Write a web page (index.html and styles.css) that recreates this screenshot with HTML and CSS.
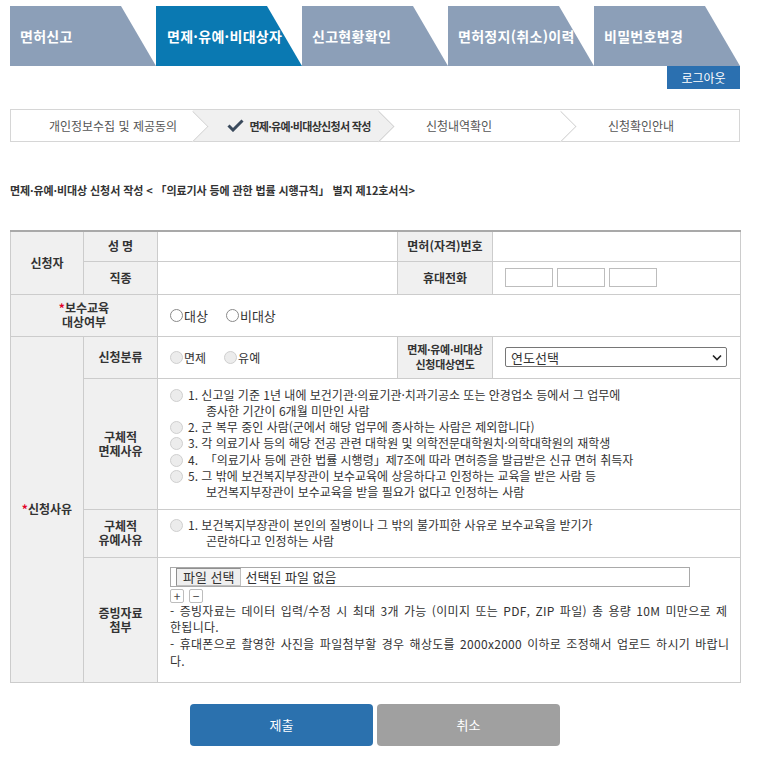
FILE: index.html
```html
<!DOCTYPE html>
<html lang="ko">
<head>
<meta charset="utf-8">
<title>면제·유예·비대상자</title>
<link rel="stylesheet" href="styles.css">
</head>
<body>
<div class="page">
  <nav class="tabs">
    <div class="tab">면허신고</div>
    <div class="tab active">면제·유예·비대상자</div>
    <div class="tab">신고현황확인</div>
    <div class="tab">면허정지(취소)이력</div>
    <div class="tab">비밀번호변경</div>
  </nav>
  <div class="logout-row"><div class="logout">로그아웃</div></div>

  <div class="steps">
    <div class="step s1">개인정보수집 및 제공동의</div>
    <div class="step s2 on">
      <svg class="check" width="17" height="13" viewBox="0 0 17 13"><path d="M1.5 6.5 L6 11 L15.5 1.5" fill="none" stroke="#3a4a5c" stroke-width="3"/></svg>
      면제·유예·비대상신청서 작성
    </div>
    <div class="step s3">신청내역확인</div>
    <div class="step s4">신청확인안내</div>
  </div>

  <h2 class="doc-title">면제·유예·비대상 신청서 작성 &lt; 「의료기사 등에 관한 법률 시행규칙」 별지 제12호서식&gt;</h2>

  <table class="form">
    <colgroup>
      <col class="c1"><col class="c2"><col class="c3"><col class="c4"><col class="c5">
    </colgroup>
    <tr class="r1">
      <th rowspan="2">신청자</th>
      <th class="spaced">성명</th>
      <td></td>
      <th>면허(자격)번호</th>
      <td></td>
    </tr>
    <tr class="r2">
      <th>직종</th>
      <td></td>
      <th>휴대전화</th>
      <td>
        <div class="phone"><span class="ph"></span><span class="ph"></span><span class="ph"></span></div>
      </td>
    </tr>
    <tr class="r3">
      <th colspan="2"><span class="req">*</span>보수교육<br>대상여부</th>
      <td colspan="3">
        <div class="radios big">
          <span class="opt"><span class="rd"></span>대상</span>
          <span class="opt"><span class="rd"></span>비대상</span>
        </div>
      </td>
    </tr>
    <tr class="r4">
      <th rowspan="4"><span class="req">*</span>신청사유</th>
      <th>신청분류</th>
      <td>
        <div class="radios">
          <span class="opt"><span class="rd dis"></span>면제</span>
          <span class="opt"><span class="rd dis"></span>유예</span>
        </div>
      </td>
      <th class="small">면제·유예·비대상<br>신청대상연도</th>
      <td>
        <div class="select">연도선택<svg width="10" height="7" viewBox="0 0 10 7"><path d="M1 1.5 L5 5.5 L9 1.5" fill="none" stroke="#222" stroke-width="1.6"/></svg></div>
      </td>
    </tr>
    <tr class="r5">
      <th>구체적<br>면제사유</th>
      <td colspan="3">
        <ul class="reasons">
          <li><span class="rd dis"></span><span class="txt">1. 신고일 기준 1년 내에 보건기관·의료기관·치과기공소 또는 안경업소 등에서 그 업무에<br>종사한 기간이 6개월 미만인 사람</span></li>
          <li><span class="rd dis"></span><span class="txt">2. 군 복무 중인 사람(군에서 해당 업무에 종사하는 사람은 제외합니다)</span></li>
          <li><span class="rd dis"></span><span class="txt">3. 각 의료기사 등의 해당 전공 관련 대학원 및 의학전문대학원치·의학대학원의 재학생</span></li>
          <li><span class="rd dis"></span><span class="txt">4. &nbsp;「의료기사 등에 관한 법률 시행령」제7조에 따라 면허증을 발급받은 신규 면허 취득자</span></li>
          <li><span class="rd dis"></span><span class="txt">5. 그 밖에 보건복지부장관이 보수교육에 상응하다고 인정하는 교육을 받은 사람 등<br>보건복지부장관이 보수교육을 받을 필요가 없다고 인정하는 사람</span></li>
        </ul>
      </td>
    </tr>
    <tr class="r6">
      <th>구체적<br>유예사유</th>
      <td colspan="3">
        <ul class="reasons">
          <li><span class="rd dis"></span><span class="txt">1. 보건복지부장관이 본인의 질병이나 그 밖의 불가피한 사유로 보수교육을 받기가<br>곤란하다고 인정하는 사람</span></li>
        </ul>
      </td>
    </tr>
    <tr class="r7">
      <th>증빙자료<br>첨부</th>
      <td colspan="3" class="attach">
        <div class="file"><span class="fbtn">파일 선택</span><span class="fname">선택된 파일 없음</span></div>
        <div class="pm"><span>+</span><span>−</span></div>
        <p class="note">- 증빙자료는 데이터 입력/수정 시 최대 3개 가능 (이미지 또는 PDF, ZIP 파일) 총 용량 10M 미만으로 제한됩니다.</p>
        <p class="note">- 휴대폰으로 촬영한 사진을 파일첨부할 경우 해상도를 2000x2000 이하로 조정해서 업로드 하시기 바랍니다.</p>
      </td>
    </tr>
  </table>

  <div class="actions">
    <div class="btn submit">제출</div>
    <div class="btn cancel">취소</div>
  </div>
</div>
</body>
</html>
```

FILE: styles.css
```css
* { box-sizing: border-box; }
body {
  margin: 0;
  font-family: "Noto Sans CJK KR", "Noto Sans", sans-serif;
  color: #333;
  background: #fff;
}
.page {
  width: 730px;
  margin: 6px 0 0 10px;
}

/* top tabs */
.tabs { display: flex; height: 60px; }
.tab {
  width: 146px;
  height: 60px;
  flex: none;
  background: #8c9fb8;
  color: #fff;
  font-weight: bold;
  font-size: 14px;
  letter-spacing: 0.3px;
  display: flex;
  align-items: center;
  padding-left: 10px;
  white-space: nowrap;
  clip-path: polygon(0 0, 111px 0, 146px 100%, 0 100%);
}
.tab.active { background: #0a79b2; padding-left: 11px; }
.logout-row { display: flex; justify-content: flex-end; }
.logout {
  width: 73px;
  height: 23px;
  background: #2b70b0;
  color: #fff;
  font-size: 12px;
  display: flex;
  align-items: center;
  justify-content: center;
}

/* steps */
.steps {
  margin-top: 20px;
  display: flex;
  height: 33px;
  border: 1px solid #d6d6d6;
}
.step {
  flex: 1 1 0;
  min-width: 0;
  position: relative;
  display: flex;
  align-items: center;
  justify-content: center;
  font-size: 12px;
  color: #555;
  background: #fff;
  white-space: nowrap;
}
.step::after {
  content: "";
  position: absolute;
  z-index: 1;
  right: -11px;
  top: 50%;
  margin-top: -11px;
  width: 22px;
  height: 22px;
  border-top: 1px solid #cfcfcf;
  border-right: 1px solid #cfcfcf;
  transform: rotate(45deg);
  background: inherit;
  clip-path: polygon(0 0, 100% 0, 100% 100%);
}
.step:last-child::after { display: none; }
.step.on {
  background: #f0f0f0;
  color: #333;
  font-size: 11px;
  font-weight: bold;
  letter-spacing: -0.7px;
}
.s1 { padding-left: 22px; }
.s2 { padding-left: 26px; }
.s2 .check { margin-right: 5px; flex: none; }
.s3 { padding-right: 22px; }
.s4 { padding-right: 18px; }

/* title */
.doc-title {
  margin: 41px 0 0;
  font-size: 11px;
  line-height: 14px;
  font-weight: bold;
  letter-spacing: -0.1px;
  color: #333;
}

/* form table */
.form {
  margin-top: 33px;
  width: 730px;
  border-collapse: collapse;
  table-layout: fixed;
  border-top: 2px solid #a9a9a9;
}
.c1 { width: 73px; }
.c2 { width: 74px; }
.c3 { width: 240px; }
.c4 { width: 95px; }
.c5 { width: 248px; }
.form th, .form td { border: 1px solid #cccccc; }
.form tr:first-child th, .form tr:first-child td { border-top: 2px solid #a9a9a9; }
.form th {
  background: #f0f0f0;
  font-size: 12px;
  line-height: 14px;
  font-weight: bold;
  color: #333;
  text-align: center;
  padding: 0;
}
.form th.spaced { letter-spacing: 3px; text-indent: 3px; }
.form th.small { font-size: 11px; line-height: 15px; letter-spacing: -0.3px; }
.form td {
  font-size: 12px;
  padding: 0 12px;
  text-align: left;
  vertical-align: middle;
}
.r1 { height: 30px; }
.r2 { height: 33px; }
.r3 { height: 42px; }
.r4 { height: 42px; }
.r5 { height: 131px; }
.r6 { height: 48px; }
.r7 { height: 125px; }
.req { color: #e4002b; }

.phone { display: flex; gap: 4px; }
.ph {
  width: 48px;
  height: 19px;
  border: 1px solid #bdbdbd;
  background: #fff;
}

.radios {
  display: flex;
  align-items: center;
  gap: 18px;
  font-size: 12px;
  color: #333;
}
.radios.big { font-size: 13px; }
.opt { display: flex; align-items: center; }
.rd {
  display: inline-block;
  flex: none;
  width: 13px;
  height: 13px;
  border: 1px solid #8a8a8a;
  border-radius: 50%;
  background: #fff;
  margin-right: 1px;
}
.rd.dis { border-color: #cfcfcf; background: #ececec; }

.select {
  width: 222px;
  height: 20px;
  border: 1px solid #767676;
  border-radius: 2px;
  display: flex;
  align-items: center;
  justify-content: space-between;
  padding: 0 4px 0 5px;
  font-size: 13px;
  color: #333;
  background: #fff;
}

.reasons {
  list-style: none;
  margin: 0;
  padding: 0;
  font-size: 12px;
  line-height: 16.2px;
  color: #333;
}
.reasons li { display: flex; align-items: flex-start; }
.reasons .rd { margin-top: 2px; margin-right: 5px; }
.reasons .txt {
  display: block;
  padding-left: 18px;
  text-indent: -18px;
}

.form td.attach { vertical-align: top; padding: 9px 10px 10px 12px; }
.file {
  width: 520px;
  height: 20px;
  border: 1px solid #a9a9a9;
  display: flex;
  align-items: center;
  padding-left: 5px;
  font-size: 13px;
  color: #333;
  background: #fff;
}
.fbtn {
  height: 18px;
  line-height: 16px;
  padding: 0 6px;
  border: 1px solid #8f8f8f;
  border-right-color: #c0c0c0;
  border-bottom-color: #c0c0c0;
  background: #efefef;
  margin-right: 4px;
}
.pm { display: flex; gap: 5px; margin-top: 2px; }
.pm span {
  width: 14px;
  height: 14px;
  border: 1px solid #bdbdbd;
  border-radius: 2px;
  font-size: 12px;
  line-height: 12px;
  text-align: center;
  color: #444;
}
.note {
  margin: 0;
  font-size: 12px;
  line-height: 16.8px;
  letter-spacing: 0.3px;
  word-spacing: 1.5px;
  word-break: break-all;
  color: #333;
}

/* actions */
.actions {
  display: flex;
  justify-content: center;
  gap: 4px;
  margin-top: 21px;
}
.btn {
  width: 183px;
  height: 42px;
  border-radius: 4px;
  color: #fff;
  font-size: 13px;
  display: flex;
  align-items: center;
  justify-content: center;
}
.submit { background: #2b71ae; }
.cancel { background: #a0a0a0; }
```
